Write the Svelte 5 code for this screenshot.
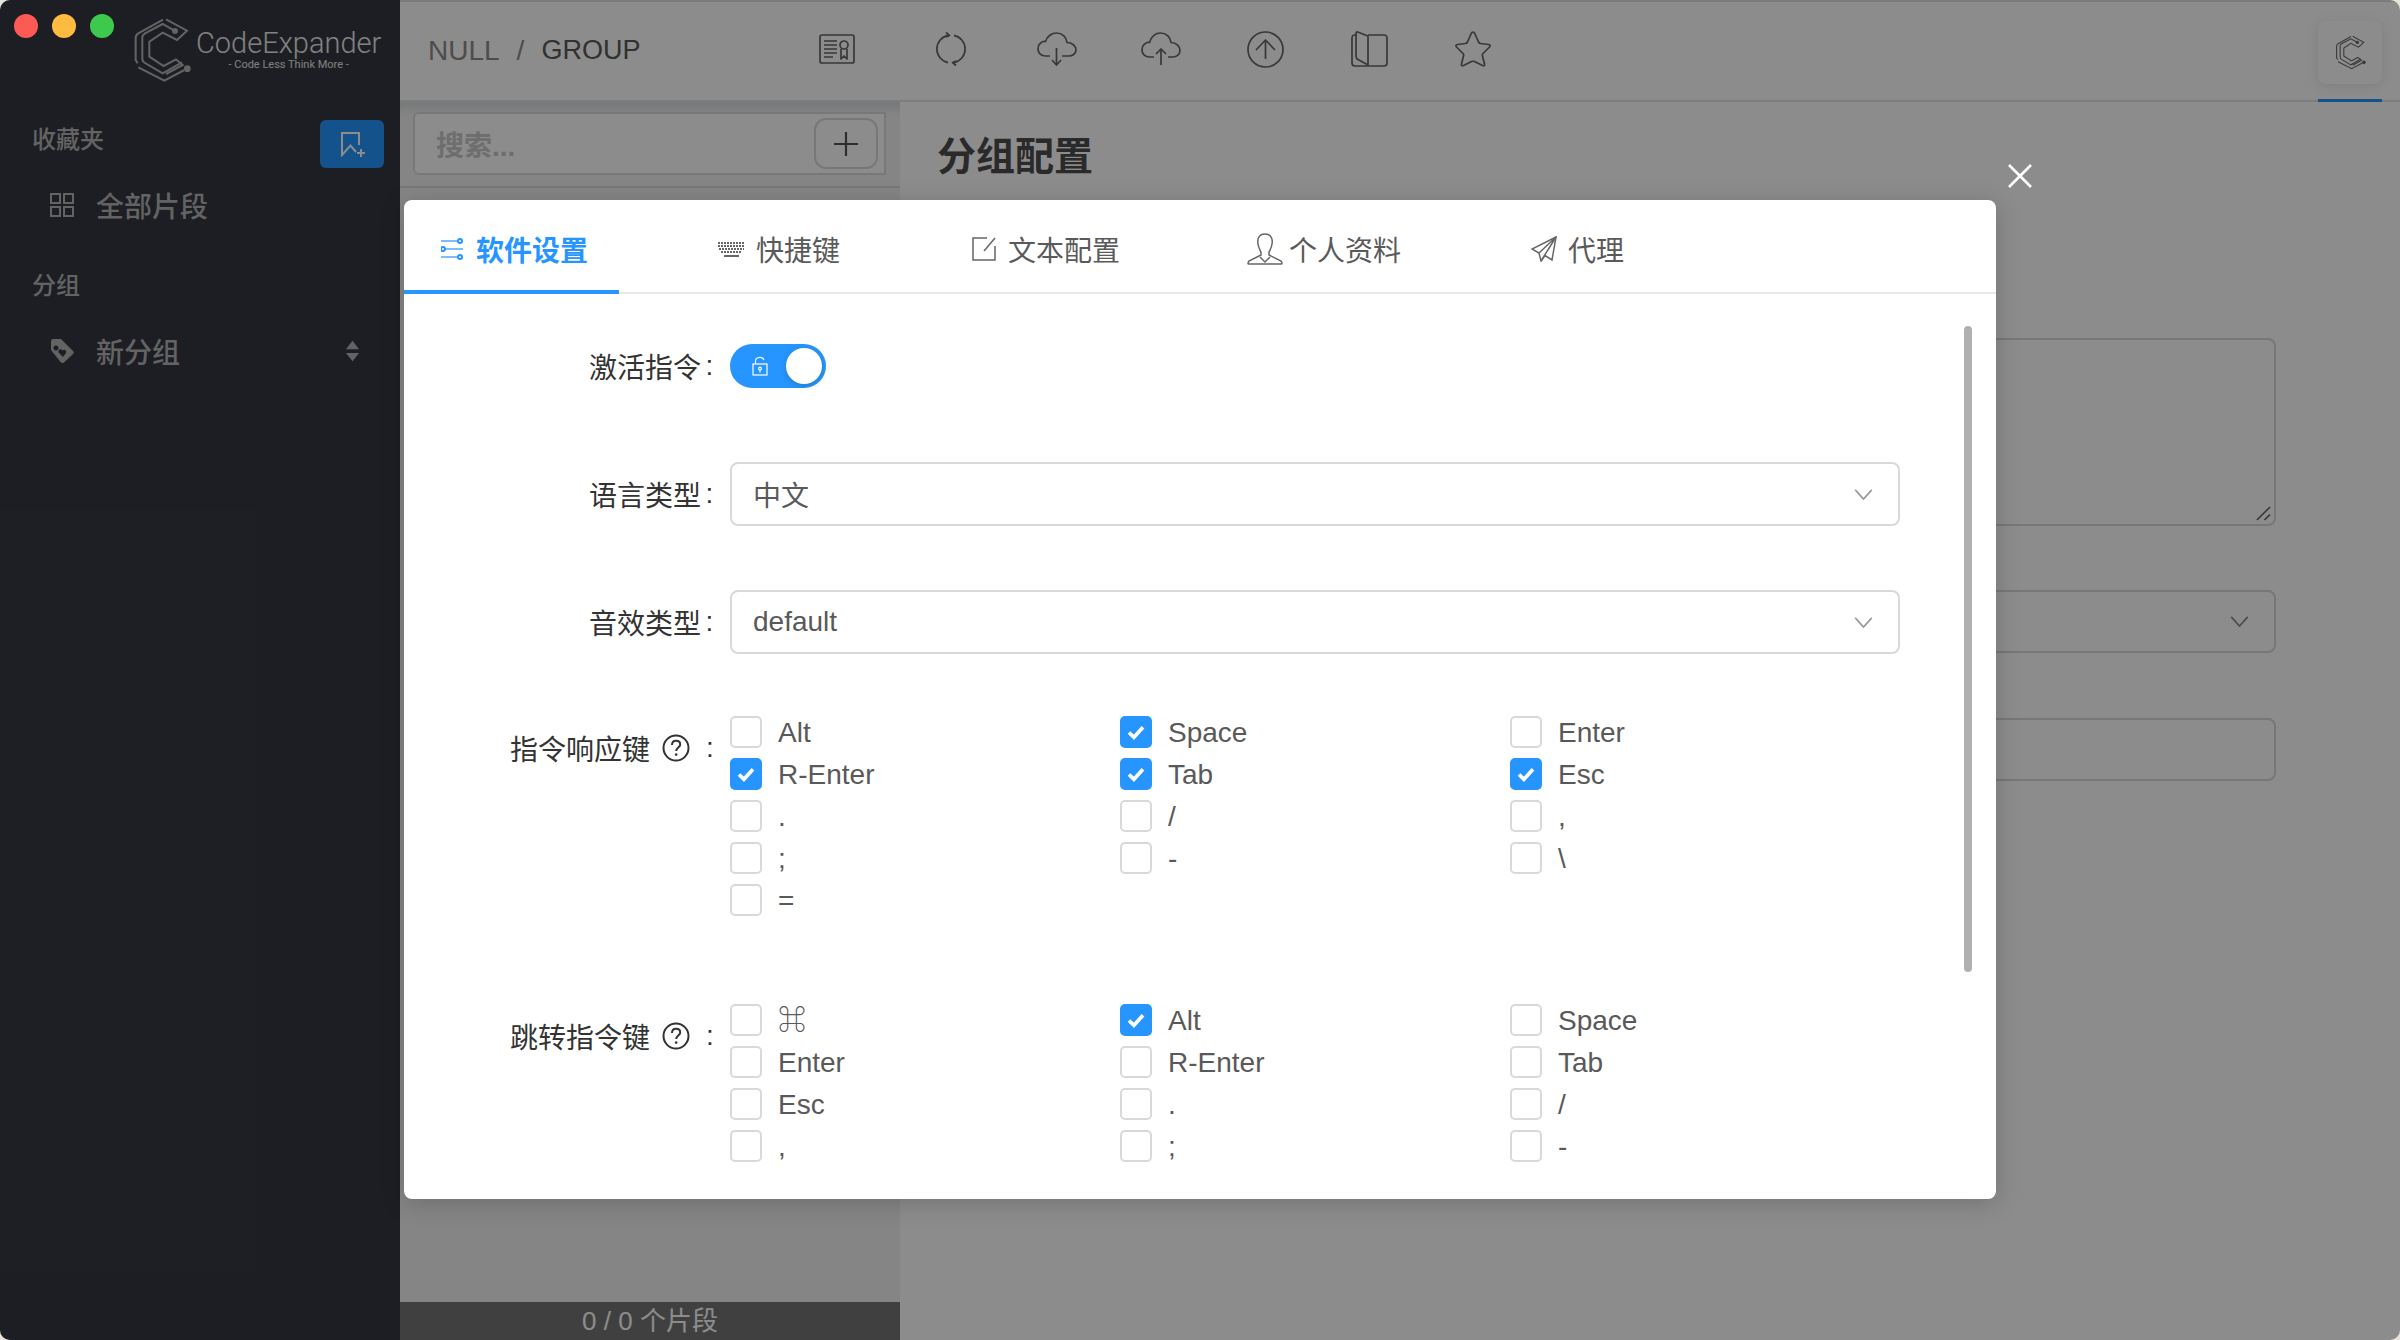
<script lang="ts">
    const responseKeys = [
        ["Alt", false], ["Space", true], ["Enter", false],
        ["R-Enter", true], ["Tab", true], ["Esc", true],
        [".", false], ["/", false], [",", false],
        [";", false], ["-", false], ["\\", false],
        ["=", false],
    ];
    const jumpKeys = [
        ["⌘", false], ["Alt", true], ["Space", false],
        ["Enter", false], ["R-Enter", false], ["Tab", false],
        ["Esc", false], [".", false], ["/", false],
        [",", false], [";", false], ["-", false],
    ];
</script>

{#snippet logo()}
    <svg class="logo-mark" viewBox="30 15 180 210" fill="none" stroke="currentColor" stroke-width="6">
        <path d="M126 29 L52 70 Q44 75 44 84 V150 L50 160" />
        <path d="M52 172 L130 212 L190 180" />
        <path d="M160 62 L125 42 L72 70 Q64 75 64 82 V146 Q64 154 72 159 L125 190 L183 157" />
        <path d="M135 28 L198 62 L168 90 L125 68 L85 95 V140 L128 168 L165 148 L185 165 L135 192" />
        <circle cx="162" cy="63" r="9" fill="currentColor" stroke="none" />
        <circle cx="199" cy="176" r="10" fill="currentColor" stroke="none" />
    </svg>
{/snippet}

{#snippet chevron()}
    <svg class="chevron" viewBox="0 0 20 12" fill="none" stroke="currentColor" stroke-width="1.8">
        <path d="M1 1 L10 11 L19 1" />
    </svg>
{/snippet}

{#snippet help()}
    <svg class="help" viewBox="0 0 28 28" fill="none" stroke="currentColor" stroke-width="2">
        <circle cx="14" cy="14" r="12.5" />
        <path d="M10 11 C10 8 12 6.8 14.2 6.8 C16.6 6.8 18.2 8.4 18.2 10.4 C18.2 13.4 14.2 13.6 14.2 17" />
        <circle cx="14.2" cy="20.6" r="1.3" fill="currentColor" stroke="none" />
    </svg>
{/snippet}

{#snippet keyGrid(keys)}
    <div class="key-grid">
        {#each keys as [name, checked]}
            <div class="key">
                <span class={["box", checked && "checked"]}>
                    {#if checked}
                        <svg viewBox="0 0 32 32" fill="none" stroke="#fff" stroke-width="4.2">
                            <path d="M8 16.5 L13.6 22 L24 10.5" />
                        </svg>
                    {/if}
                </span>
                <span class="key-name">{name}</span>
            </div>
        {/each}
    </div>
{/snippet}

<div class="app">
    <aside class="sidebar">
        <div class="brand">
            {@render logo()}
            <div class="brand-text">
                <div class="brand-name">CodeExpander</div>
                <div class="brand-tag">- Code Less Think More -</div>
            </div>
        </div>

        <div class="side-head">
            <span>收藏夹</span>
            <button class="fav-add" aria-label="add favourite">
                <svg viewBox="0 0 26 26" fill="none" stroke="currentColor" stroke-width="2">
                    <path d="M20 14 V2 H3 V24 L11.5 14.5 L17 21" />
                    <path d="M18 22 H26 M22 18 V26" />
                </svg>
            </button>
        </div>
        <div class="side-item">
            <svg class="side-icon" viewBox="0 0 24 24" fill="none" stroke="currentColor" stroke-width="2">
                <rect x="1" y="1" width="9" height="9" />
                <rect x="14" y="1" width="9" height="9" />
                <rect x="1" y="14" width="9" height="9" />
                <rect x="14" y="14" width="9" height="9" />
            </svg>
            <span>全部片段</span>
        </div>

        <div class="side-head group-head"><span>分组</span></div>
        <div class="side-item">
            <svg class="side-icon" viewBox="0 0 24 24" fill="currentColor">
                <path fill-rule="evenodd" d="M1 2 Q1 0 3 0 H11 L23 12 Q24.5 13.5 23 15 L14 23.5 Q12.5 24.5 11 23.5 L1 11 Z M6 6.5 a2.5 2.5 0 1 0 0.01 0 Z" />
                <path fill="#353841" d="M13 18 L8.6 13.4 Q7.6 11.4 9.6 10.4 Q11.6 9.8 12.6 11.4 Q14 10 15.6 11.2 Q17 13 15.6 14.6 Z" />
            </svg>
            <span>新分组</span>
            <svg class="sort" viewBox="0 0 16 22" fill="currentColor">
                <path d="M8 0 L15 9 H1 Z M8 22 L1 13 H15 Z" />
            </svg>
        </div>
    </aside>

    <div class="main">
        <header class="topbar">
            <div class="crumbs">
                <span class="crumb-null">NULL</span>
                <span class="crumb-sep">/</span>
                <span class="crumb-group">GROUP</span>
            </div>
            <div class="tools">
                <span class="tool first">
                    <svg width="36" height="30" viewBox="0 0 36 30">
                        <rect x="1" y="1" width="34" height="28" rx="2" />
                        <path d="M5 7 H18 M5 11 H18 M5 15 H18 M5 19 H18 M5 23 H14" />
                        <circle cx="25" cy="11" r="4" />
                        <path d="M22 15 V25 L25 22 L28 25 V15" />
                    </svg>
                </span>
                <span class="tool second">
                    <svg width="32" height="36" viewBox="0 0 32 36">
                        <path d="M13 4.3 A14 14 0 0 0 13 31.7 M19 4.3 A14 14 0 0 1 19 31.7" />
                        <path d="M11 1.5 L14.5 4.5 L11 6 M21 34.5 L17.5 31.5 L21 30" />
                    </svg>
                </span>
                <span class="tool">
                    <svg width="40" height="34" viewBox="0 0 40 34">
                        <path d="M13 24 H8 C3 24 1 20 1 16.5 C1 12 5 9 8.5 9.5 C10 4 15 1 19.5 1 C25 1 29.5 5 30 10.5 C35 10.5 39 14 39 18 C39 22 35 24 32 24 H25" />
                        <path d="M19.5 16 V33 M15 28 L19.5 33 L24 28" />
                    </svg>
                </span>
                <span class="tool">
                    <svg width="42" height="34" viewBox="0 0 40 34">
                        <path d="M13 25 H8 C3 25 1 21 1 17.5 C1 13 5 10 8.5 10.5 C10 4 15 1 19.5 1 C25 1 29.5 5 30 10.5 C35 10.5 39 14 39 18.5 C39 23 35 25 32 25 H27" />
                        <path d="M20 33 V17 M15 22 L20 17 L25 22" />
                    </svg>
                </span>
                <span class="tool">
                    <svg width="37" height="37" viewBox="0 0 37 37">
                        <circle cx="18.5" cy="18.5" r="17.5" />
                        <path d="M18.5 28 V9 M9 19 L18.5 9 L28 19" />
                    </svg>
                </span>
                <span class="tool">
                    <svg width="37" height="36" viewBox="0 0 37 36">
                        <path d="M6 4 H4 Q1 4 1 7 V32 Q1 35 4 35 H33 Q36 35 36 32 V7 Q36 4 33 4 H17" />
                        <path d="M6 0.8 L17 5 V34 L7 28.5 Q5 27.5 5 25 V2 Z" />
                    </svg>
                </span>
                <span class="tool">
                    <svg width="36" height="36" viewBox="0 0 36 36">
                        <path d="M18 1 Q19 1 20 3 L23.5 11 Q24 12 25.5 12.5 L33.5 13.5 Q36 14 34.5 16 L28 22.5 Q27 23.5 27.5 25 L29.5 33 Q30 35.5 27.5 34.5 L19.5 30.5 Q18 30 16.5 30.5 L8.5 34.5 Q6 35.5 6.5 33 L8.5 25 Q9 23.5 8 22.5 L1.5 16 Q0 14 2.5 13.5 L10.5 12.5 Q12 12 12.5 11 L16 3 Q17 1 18 1 Z" />
                    </svg>
                </span>
            </div>
            <div class="account-tab">
                <div class="account">
                    {@render logo()}
                </div>
            </div>
        </header>

        <div class="content">
            <section class="list">
                <div class="search-wrap">
                    <div class="search">
                        <span class="placeholder">搜索...</span>
                        <button class="add" aria-label="add">
                            <svg viewBox="0 0 26 26" stroke="currentColor" stroke-width="2.4">
                                <path d="M13 0 V26 M0 13 H26" />
                            </svg>
                        </button>
                    </div>
                </div>
                <div class="list-fill"></div>
                <footer class="list-foot">0 / 0 个片段</footer>
            </section>

            <section class="detail">
                <h1>分组配置</h1>
                <div class="field area">
                    <svg class="grip" viewBox="0 0 16 16" stroke="currentColor" stroke-width="1.5">
                        <path d="M1 15 L15 1 M9 15 L15 9" />
                    </svg>
                </div>
                <div class="field select">
                    {@render chevron()}
                </div>
                <div class="field plain"></div>
            </section>
        </div>
    </div>

    <div class="mask">
        <div class="modal">
            <button class="close" aria-label="close">
                <svg viewBox="0 0 24 24" stroke="#fff" stroke-width="2.6">
                    <path d="M1 1 L23 23 M23 1 L1 23" />
                </svg>
            </button>

            <nav class="tabs">
                <div class="tab active">
                    <svg width="22" height="22" viewBox="0 0 22 22" fill="none" stroke="#7dbdff" stroke-width="2">
                        <path d="M0 3 H17 M4 11 H22 M0 19 H17" />
                        <circle cx="19" cy="3" r="2" stroke="#2695ff" />
                        <circle cx="2" cy="11" r="2" stroke="#2695ff" />
                        <circle cx="19" cy="19" r="2" stroke="#2695ff" />
                    </svg>
                    <span>软件设置</span>
                </div>
                <div class="tab keyboard">
                    <svg width="27" height="16" viewBox="0 0 27 16" fill="none" stroke="#666">
                        <path stroke-width="2" stroke-dasharray="2 1" d="M0 2 H27 M0 5 H27 M1 8 H26 M3 11 H24" />
                        <path stroke-width="2" d="M6 15 H21" />
                    </svg>
                    <span>快捷键</span>
                </div>
                <div class="tab">
                    <svg width="24" height="24" viewBox="0 0 24 24" fill="none" stroke="#666" stroke-width="1.5">
                        <path d="M15 1 H1 V23 H23 V9" />
                        <path d="M23 1 L12 14" />
                    </svg>
                    <span>文本配置</span>
                </div>
                <div class="tab profile">
                    <svg width="36" height="32" viewBox="0 0 36 32" fill="none" stroke="#666" stroke-width="1.5">
                        <path d="M18 1 C12 1 10 6 11 11 C11.5 15 13 17 14 19 V22 L2 28 Q0 31 2 31 H34 Q36 31 34 28 L22 22 V19 C23 17 24.5 15 25 11 C26 6 24 1 18 1 Z" />
                        <path d="M13 24 L18 29 L23 24" />
                    </svg>
                    <span>个人资料</span>
                </div>
                <div class="tab proxy">
                    <svg width="26" height="26" viewBox="0 0 26 26" fill="none" stroke="#666" stroke-width="1.5">
                        <path d="M25 1 L1 13 L8 17 L10 25 L14 19.5 L21 24 Z" />
                        <path d="M25 1 L8 17 M25 1 L10 25" />
                    </svg>
                    <span>代理</span>
                </div>
            </nav>

            <div class="pane">
                <div class="scroll-thumb"></div>

                <div class="row">
                    <div class="label">激活指令<span class="colon">:</span></div>
                    <div class="control">
                        <div class="toggle">
                            <svg viewBox="0 0 16 20" fill="none" stroke="#fff" stroke-width="1.2">
                                <rect x="1" y="8" width="14" height="11" />
                                <path d="M3.5 8 V5 C3.5 1 10.5 0 12 4" />
                                <circle cx="8" cy="12.5" r="1.4" />
                                <path d="M8 14 V16.5" />
                            </svg>
                            <span class="knob"></span>
                        </div>
                    </div>
                </div>

                <div class="row">
                    <div class="label">语言类型<span class="colon">:</span></div>
                    <div class="control">
                        <div class="combo">中文{@render chevron()}</div>
                    </div>
                </div>

                <div class="row">
                    <div class="label">音效类型<span class="colon">:</span></div>
                    <div class="control">
                        <div class="combo">default{@render chevron()}</div>
                    </div>
                </div>

                <div class="row keys">
                    <div class="label">指令响应键{@render help()}<span class="colon wide">:</span></div>
                    <div class="control">{@render keyGrid(responseKeys)}</div>
                </div>

                <div class="row keys">
                    <div class="label">跳转指令键{@render help()}<span class="colon wide">:</span></div>
                    <div class="control">{@render keyGrid(jumpKeys)}</div>
                </div>
            </div>
        </div>
    </div>

    <div class="lights">
        <span class="light red"></span>
        <span class="light yellow"></span>
        <span class="light green"></span>
    </div>
</div>

<style>
    :global(body) {
        margin: 0;
        background: #e8e3d8;
    }

    .app {
        position: relative;
        display: flex;
        width: 2400px;
        height: 1340px;
        overflow: hidden;
        border-radius: 10px;
        background: #fff;
        font-family: "Liberation Sans", "Noto Sans CJK SC", "DejaVu Sans", sans-serif;
        font-size: 28px;
    }

    button {
        all: unset;
        box-sizing: border-box;
    }

    .lights {
        position: absolute;
        top: 14px;
        left: 14px;
        display: flex;
        gap: 14px;
    }

    .light {
        width: 24px;
        height: 24px;
        border-radius: 50%;
    }

    .red { background: #fc5a55; }
    .yellow { background: #fdbc40; }
    .green { background: #3cc94d; }

    .sidebar {
        flex: none;
        width: 400px;
        background: #353841;
        color: #b4b4b6;
    }

    .brand {
        display: flex;
        box-sizing: border-box;
        height: 90px;
        padding: 15px 0 0 131px;
        gap: 5px;
    }

    .logo-mark {
        width: 60px;
        height: 70px;
        flex: none;
    }

    .brand-text {
        padding-top: 12px;
        text-align: center;
    }

    .brand-name {
        font-family: Roboto, sans-serif;
        font-weight: 300;
        font-size: 29px;
        line-height: 32px;
        color: #fff;
        opacity: 0.9;
    }

    .brand-tag {
        font-family: Roboto, sans-serif;
        font-size: 11px;
        line-height: 12px;
        color: #e8e8e8;
    }

    .side-head {
        display: flex;
        align-items: center;
        justify-content: space-between;
        margin-top: 30px;
        height: 48px;
        padding: 0 16px 0 32px;
        font-size: 24px;
        font-weight: 500;
    }

    .side-head span {
        position: relative;
        top: -7px;
    }

    .group-head {
        margin-top: 41px;
        height: 30px;
    }

    .group-head span {
        top: 0;
    }

    .fav-add {
        display: flex;
        align-items: center;
        justify-content: center;
        width: 64px;
        height: 48px;
        border-radius: 6px;
        background: #2595ff;
        color: #fff;
    }

    .fav-add svg {
        width: 26px;
        height: 26px;
    }

    .side-item {
        display: flex;
        align-items: center;
        height: 44px;
        padding: 0 40px 0 50px;
        margin-top: 15px;
        font-size: 28px;
        font-weight: 500;
    }

    .group-head + .side-item {
        margin-top: 31px;
    }

    .side-icon {
        width: 24px;
        height: 24px;
        margin-right: 22px;
    }

    .sort {
        width: 15px;
        height: 22px;
        margin-left: auto;
    }

    .main {
        flex: 1;
        display: flex;
        flex-direction: column;
        min-width: 0;
    }

    .topbar {
        flex: none;
        display: flex;
        align-items: center;
        box-sizing: border-box;
        height: 102px;
        border-top: 2px solid #e0e0e0;
        border-bottom: 2px solid #e3e3e3;
        padding-left: 28px;
    }

    .crumbs {
        flex: none;
        width: 357px;
        display: flex;
        gap: 17px;
        font-size: 28px;
    }

    .crumb-null, .crumb-sep { color: #8c8c8c; }
    .crumb-group { color: #595959; font-size: 27px; }

    .tools {
        display: flex;
        margin-bottom: 4px;
    }

    .tool {
        display: flex;
        align-items: center;
        justify-content: center;
        width: 104px;
    }

    .tool.first {
        margin-right: 10px;
    }

    .tool.second {
        margin-right: 2px;
    }

    .tool svg {
        fill: none;
        stroke: #666;
        stroke-width: 1.7;
        stroke-linejoin: round;
    }

    .account-tab {
        box-sizing: border-box;
        margin-left: auto;
        margin-right: 18px;
        height: 100px;
        width: 64px;
        padding-top: 19px;
        border-bottom: 3px solid #2595ff;
        align-self: flex-start;
    }

    .account {
        display: flex;
        align-items: center;
        justify-content: center;
        height: 63px;
        border-radius: 8px;
        background: #fff;
        box-shadow: 0 2px 12px rgba(0, 0, 0, 0.1);
        color: #666;
    }

    .account .logo-mark {
        width: 32px;
        height: 37px;
    }

    .content {
        flex: 1;
        display: flex;
        min-height: 0;
    }

    .list {
        flex: none;
        width: 500px;
        display: flex;
        flex-direction: column;
        box-sizing: border-box;
        background: #f2f3f5;
        box-shadow: inset 0 14px 12px -8px rgba(0, 0, 0, 0.12);
    }

    .search-wrap {
        box-sizing: border-box;
        height: 86px;
        padding: 10px 14px 10px 13px;
        border-bottom: 2px solid #d9dadc;
    }

    .search {
        display: flex;
        align-items: center;
        justify-content: space-between;
        box-sizing: border-box;
        height: 63px;
        padding: 0 6px 0 21px;
        background: #fff;
        border: 2px solid #dadada;
        border-radius: 6px 0 0 6px;
    }

    .placeholder {
        color: #c8c8c8;
        font-weight: 700;
    }

    .add {
        display: flex;
        align-items: center;
        justify-content: center;
        width: 64px;
        height: 51px;
        border: 2px solid #d9d9d9;
        border-radius: 12px;
        color: #555;
    }

    .add svg {
        width: 24px;
        height: 26px;
    }

    .list-fill {
        flex: 1;
    }

    .list-foot {
        height: 38px;
        line-height: 38px;
        text-align: center;
        background: #767676;
        color: #fff;
        font-size: 26px;
    }

    .detail {
        flex: 1;
        padding: 0 124px 0 37px;
        min-width: 0;
    }

    h1 {
        margin: 0;
        height: 110px;
        line-height: 110px;
        font-size: 39px;
        font-weight: 700;
        color: #4d4d4d;
    }

    .field {
        position: relative;
        box-sizing: border-box;
        border: 2px solid #d9d9d9;
        border-radius: 8px;
        color: #8a8a8a;
    }

    .area {
        height: 188px;
        margin-top: 126px;
    }

    .grip {
        position: absolute;
        right: 3px;
        bottom: 3px;
        width: 15px;
        height: 15px;
        color: #555;
    }

    .select {
        display: flex;
        align-items: center;
        justify-content: flex-end;
        height: 63px;
        margin-top: 64px;
        padding-right: 25px;
    }

    .plain {
        height: 63px;
        margin-top: 65px;
    }

    .chevron {
        width: 19px;
        height: 11px;
        flex: none;
    }

    .mask {
        position: absolute;
        inset: 0;
        display: flex;
        justify-content: center;
        padding-top: 200px;
        box-sizing: border-box;
        background: rgba(0, 0, 0, 0.45);
    }

    .modal {
        position: relative;
        width: 1592px;
        height: 999px;
        background: #fff;
        border-radius: 8px;
        box-shadow: 0 4px 24px rgba(0, 0, 0, 0.18);
        display: flex;
        flex-direction: column;
    }

    .close {
        position: absolute;
        top: -36px;
        right: -36px;
        width: 24px;
        height: 24px;
    }

    .close svg {
        display: block;
    }

    .tabs {
        flex: none;
        display: flex;
        gap: 66px;
        box-sizing: border-box;
        height: 94px;
        border-bottom: 2px solid #e8e8e8;
    }

    .tab {
        display: flex;
        align-items: center;
        gap: 12px;
        box-sizing: border-box;
        height: 94px;
        padding: 4px 33px 0;
        color: #5a5a5a;
        font-size: 28px;
    }

    .tab:first-child {
        gap: 13px;
        padding-left: 37px;
        padding-right: 31px;
    }

    .tab.keyboard {
        gap: 11px;
    }

    .tab.profile {
        gap: 6px;
        margin-left: -5px;
    }

    .tab.proxy {
        gap: 11px;
        margin-left: -2px;
    }

    .tab.active {
        color: #2695ff;
        font-weight: 700;
        box-shadow: inset 0 -4px 0 #2695ff;
    }

    .pane {
        position: relative;
        flex: none;
        box-sizing: border-box;
        height: 842px;
        margin-top: 32px;
        padding-top: 8px;
        overflow: hidden;
    }

    .scroll-thumb {
        position: absolute;
        top: 0;
        right: 24px;
        width: 8px;
        height: 646px;
        border-radius: 4px;
        background: #b0b0b0;
    }

    .row {
        display: flex;
        margin-bottom: 64px;
    }

    .row:nth-child(4) {
        margin-bottom: 62px;
    }

    .row.keys {
        margin-bottom: 78px;
    }

    .label {
        flex: none;
        box-sizing: border-box;
        width: 326px;
        height: 64px;
        display: flex;
        align-items: center;
        justify-content: flex-end;
        color: #333;
        white-space: nowrap;
    }

    .colon {
        width: 29px;
        text-align: center;
        padding-right: 12px;
        box-sizing: border-box;
    }

    .colon.wide {
        width: 40px;
        padding-right: 0;
    }

    .help {
        width: 28px;
        height: 28px;
        margin-left: 12px;
        flex: none;
    }

    .control {
        width: 1170px;
        min-height: 64px;
        display: flex;
        align-items: center;
    }

    .keys .control {
        display: block;
    }

    .toggle {
        position: relative;
        display: flex;
        align-items: center;
        width: 96px;
        height: 44px;
        padding-left: 22px;
        box-sizing: border-box;
        border-radius: 22px;
        background: #2695ff;
    }

    .toggle svg {
        width: 16px;
        height: 20px;
    }

    .knob {
        position: absolute;
        top: 4px;
        right: 4px;
        width: 36px;
        height: 36px;
        border-radius: 50%;
        background: #fff;
        box-shadow: 0 2px 6px rgba(0, 35, 11, 0.2);
    }

    .combo {
        display: flex;
        align-items: center;
        justify-content: space-between;
        box-sizing: border-box;
        width: 100%;
        height: 64px;
        padding: 0 25px 0 21px;
        border: 2px solid #d9d9d9;
        border-radius: 8px;
        color: #595959;
    }

    .combo .chevron {
        color: #999;
    }

    .key-grid {
        display: grid;
        grid-template-columns: repeat(3, 390px);
        grid-auto-rows: 42px;
    }

    .key {
        display: flex;
        align-items: flex-start;
        gap: 16px;
        color: #595959;
        height: 42px;
    }

    .key-name {
        line-height: 34px;
    }

    .box {
        flex: none;
        box-sizing: border-box;
        width: 32px;
        height: 32px;
        border: 2px solid #d9d9d9;
        border-radius: 5px;
        background: #fff;
    }

    .box.checked {
        border-color: #2695ff;
        background: #2695ff;
    }

    .box svg {
        display: block;
        width: 28px;
        height: 28px;
    }
</style>
